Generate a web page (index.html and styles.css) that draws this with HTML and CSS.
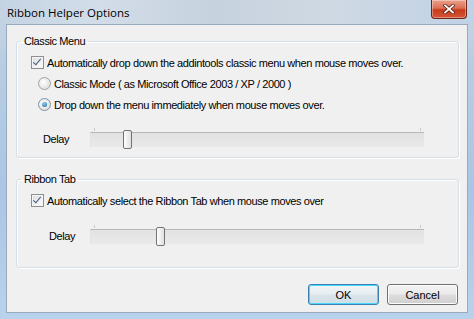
FILE: index.html
```html
<!DOCTYPE html>
<html lang="en">

<head>
    <meta charset="UTF-8">
    <title>Ribbon Helper Options</title>
    <link rel="stylesheet" href="styles.css">
</head>

<body>
    <div class="vindue">
        <header class="titel-bar">
            <span class="titel">Ribbon Helper Options</span>
            <button class="luk" aria-label="Close">
                <svg width="12" height="10" viewBox="0 0 12 10">
                    <path d="M2 1.5 L10 8.5 M10 1.5 L2 8.5" stroke="#5a1a10" stroke-width="3.4" stroke-linecap="square" />
                    <path d="M2 1.5 L10 8.5 M10 1.5 L2 8.5" stroke="#fff" stroke-width="1.8" stroke-linecap="square" />
                </svg>
            </button>
        </header>

        <main class="indhold">
            <fieldset class="gruppe gruppe-menu">
                <legend>Classic Menu</legend>
                <div class="række">
                    <span class="boks tjekket"></span>
                    <span>Automatically drop down the addintools classic menu when mouse moves over.</span>
                </div>
                <div class="række indrykket">
                    <span class="radio"></span>
                    <span>Classic Mode ( as Microsoft Office 2003 / XP / 2000 )</span>
                </div>
                <div class="række indrykket">
                    <span class="radio valgt"></span>
                    <span>Drop down the menu immediately when mouse moves over.</span>
                </div>
                <div class="række slider-række">
                    <span class="delay delay-1">Delay</span>
                    <div class="spor">
                        <span class="tik venstre"></span>
                        <span class="tik hoejre"></span>
                        <span class="knop" style="left: 32px"></span>
                    </div>
                </div>
            </fieldset>

            <fieldset class="gruppe gruppe-tab">
                <legend>Ribbon Tab</legend>
                <div class="række">
                    <span class="boks tjekket"></span>
                    <span>Automatically select the Ribbon Tab when mouse moves over</span>
                </div>
                <div class="række slider-række">
                    <span class="delay delay-2">Delay</span>
                    <div class="spor">
                        <span class="tik venstre"></span>
                        <span class="tik hoejre"></span>
                        <span class="knop" style="left: 65px"></span>
                    </div>
                </div>
            </fieldset>

            <footer class="knapper">
                <button class="knap standard">OK</button>
                <button class="knap">Cancel</button>
            </footer>
        </main>
    </div>
</body>

</html>
```

FILE: styles.css
```css
body {
    margin: 0;
    width: 474px;
    height: 319px;
    overflow: hidden;
    font-family: "Liberation Sans", Arial, sans-serif;
    font-size: 11px;
    letter-spacing: -0.4px;
    color: #000;
}

.vindue {
    width: 474px;
    height: 319px;
    display: flex;
    flex-direction: column;
    background: linear-gradient(180deg, #c9d7e6 0%, #b8cde3 20%, #aac6e4 60%, #b9d2ec 100%);
}

.titel-bar {
    height: 24px;
    display: flex;
    align-items: flex-start;
    justify-content: space-between;
    padding-left: 7px;
    padding-right: 7px;
    background: linear-gradient(90deg, #c4d3e3 0%, #d2dde9 20%, #c6d2de 45%, #cfd9e4 70%, #c0d2e6 100%);
}

.titel {
    font-family: "Open Sans", sans-serif;
    font-size: 11.5px;
    color: #000;
    line-height: 16px;
    margin-top: 5px;
    letter-spacing: 0;
}

.luk {
    width: 36px;
    height: 19px;
    padding: 0;
    margin: 0;
    border: 1px solid #6b2418;
    border-top: none;
    border-radius: 0 0 4px 4px;
    background: linear-gradient(180deg, #eba08c 0%, #dc6f55 45%, #c73b1a 55%, #d6553a 100%);
    box-shadow: inset 0 0 0 1px rgba(255, 255, 255, 0.35);
    display: flex;
    align-items: center;
    justify-content: center;
}

.indhold {
    flex: 1;
    margin: 0 6px 6px 6px;
    border: 1px solid #9aaabd;
    background: #f0f0f0;
    padding: 10px 8px 0 9px;
    display: flex;
    flex-direction: column;
}

.gruppe {
    margin: 0;
    border: 1px solid #d5dfe5;
    border-radius: 3px;
    box-shadow: inset 1px 1px 0 #fff, 1px 1px 0 #fff;
    padding: 0 0 0 14px;
}

.gruppe legend {
    padding: 0 3px;
    margin-left: -10px;
    line-height: 13px;
}

.gruppe-menu {
    height: 117px;
    padding-top: 4px;
}

.gruppe-tab {
    margin-top: 15px;
    height: 89px;
    padding-top: 4px;
}

.række {
    display: flex;
    align-items: center;
    height: 21px;
    gap: 3px;
}

.indrykket {
    padding-left: 7px;
}

.boks {
    width: 11px;
    height: 11px;
    border: 1px solid #8e8f8f;
    background: linear-gradient(135deg, #dcdcdc, #fff);
    box-shadow: inset 0 0 0 1px #f4f4f4;
    position: relative;
    flex: none;
}

.boks.tjekket::after {
    content: "";
    position: absolute;
    left: 3px;
    top: 0;
    width: 3px;
    height: 7px;
    border: solid #3f558a;
    border-width: 0 1.5px 1.5px 0;
    transform: rotate(40deg);
}

.radio {
    width: 11px;
    height: 11px;
    border: 1px solid #a3a3a3;
    border-radius: 50%;
    background: radial-gradient(circle at 40% 40%, #fff, #d4d4d4);
    flex: none;
    position: relative;
}

.radio.valgt {
    border-color: #7f93a8;
}

.radio.valgt::after {
    content: "";
    position: absolute;
    left: 3px;
    top: 3px;
    width: 5px;
    height: 5px;
    border-radius: 50%;
    background: radial-gradient(circle at 40% 35%, #8fd0f4, #1f5f9b);
}

.slider-række {
    height: 26px;
    margin-top: 11px;
    gap: 0;
}

.gruppe-tab .slider-række {
    margin-top: 12px;
}

.delay {
    display: inline-block;
}

.delay-1 {
    padding-left: 12px;
    width: 47px;
}

.delay-2 {
    padding-left: 18px;
    width: 41px;
}

.spor {
    position: relative;
    width: 333px;
    height: 14px;
    border-top: 1px solid #b7b7b7;
    border-left: 1px solid #e3e3e3;
    background: linear-gradient(180deg, #e2e2e2, #e9e9e9);
}

.tik {
    position: absolute;
    top: -5px;
    width: 1px;
    height: 3px;
    background: #c8c8c8;
}

.tik.venstre {
    left: 3px;
}

.tik.hoejre {
    right: 3px;
}

.knop {
    position: absolute;
    top: -3px;
    width: 7px;
    height: 17px;
    border: 1px solid #737373;
    border-radius: 2px;
    background: linear-gradient(90deg, #fdfdfd, #e0e0e0);
}

.knapper {
    display: flex;
    justify-content: flex-end;
    gap: 8px;
    margin-top: 16px;
    padding-right: 1px;
}

.knap {
    width: 71px;
    height: 21px;
    font-family: "Liberation Sans", Arial, sans-serif;
    font-size: 11px;
    color: #000;
    border: 1px solid #707070;
    border-radius: 3px;
    background: linear-gradient(180deg, #f2f2f2 0%, #ebebeb 48%, #dddddd 52%, #cfcfcf 100%);
    box-shadow: inset 0 0 0 1px #fcfcfc;
    padding: 0;
}

.knap.standard {
    border-color: #3c7fb1;
    box-shadow: inset 0 0 0 1px #48d8fb;
    background: linear-gradient(180deg, #f0f4f6 0%, #e7eef2 48%, #dbe5eb 52%, #cfdde5 100%);
}
```
